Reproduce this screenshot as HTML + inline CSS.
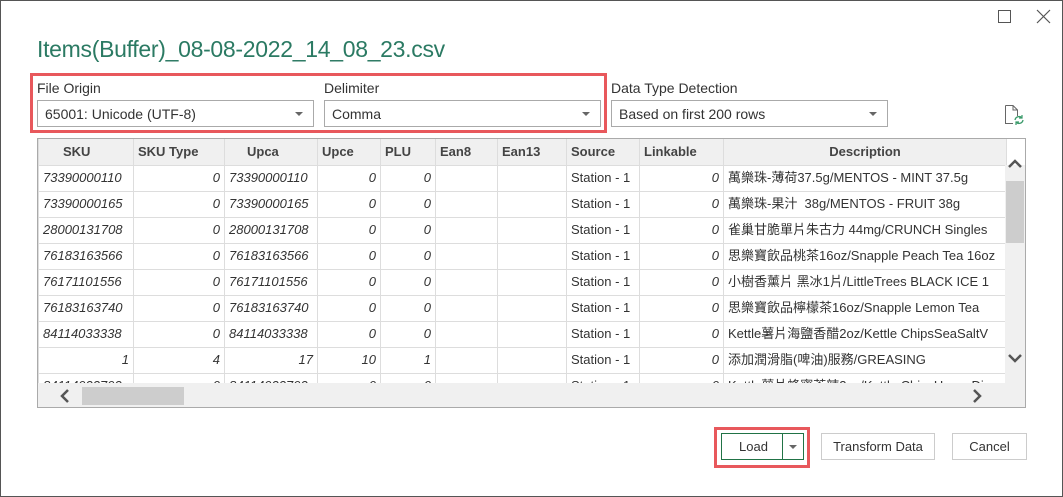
<!DOCTYPE html>
<html><head><meta charset="utf-8"><style>
*{box-sizing:border-box;margin:0;padding:0}
body{width:1063px;height:497px;background:#fff;font-family:"Liberation Sans","Noto Sans CJK TC",sans-serif;font-size:13px;color:#333;position:relative;overflow:hidden}
.frame{position:absolute;left:0;top:0;width:1063px;height:497px;border:1px solid #555}
.abs{position:absolute}
.title{left:37px;top:36px;font-size:23px;color:#2b7a63;letter-spacing:-0.3px}
.lbl{font-size:14px;color:#333}
.dd{border:1px solid #aaa;height:27px;background:#fff;font-size:14px;padding:5px 7px;color:#333}
.dd:after{content:"";position:absolute;right:10px;top:11px;border-left:4px solid transparent;border-right:4px solid transparent;border-top:4px solid #666}
.red{border:3px solid #e8585c}
table{border-collapse:collapse;table-layout:fixed;font-size:13px}
td,th{border:1px solid #ddd;height:26px;padding:0 4px;white-space:nowrap;overflow:hidden}
th{background:#f0f0f0;font-weight:bold;color:#444;text-align:left;height:26px;border-top:none}
td{font-style:italic;text-align:right;color:#333;padding-top:0;line-height:22px}
td.n{font-style:normal;text-align:left}
.btn{border:1px solid #ccc;height:27px;text-align:center;line-height:25px;font-size:13px;color:#333;background:#fff}
</style></head><body>
<div class="frame"></div>
<div class="abs" style="left:998px;top:10px;width:13px;height:13px;border:1px solid #555"></div>
<svg class="abs" style="left:1036px;top:9px" width="15" height="15"><path d="M1 1L14 14M14 1L1 14" stroke="#555" stroke-width="1.2"/></svg>
<div class="abs title">Items(Buffer)_08-08-2022_14_08_23.csv</div>
<div class="abs red" style="left:30px;top:73px;width:577px;height:60px"></div>
<div class="abs lbl" style="left:37px;top:80px">File Origin</div>
<div class="abs lbl" style="left:324px;top:80px">Delimiter</div>
<div class="abs lbl" style="left:611px;top:80px">Data Type Detection</div>
<div class="abs dd" style="left:37px;top:100px;width:277px">65001: Unicode (UTF-8)</div>
<div class="abs dd" style="left:324px;top:100px;width:277px">Comma</div>
<div class="abs dd" style="left:611px;top:100px;width:277px">Based on first 200 rows</div>
<svg class="abs" style="left:1004px;top:104px" width="20" height="22"><path d="M1.5 1.5H9L13.5 6V12M1.5 1.5V19.5H9M9 1.5V6H13.5" fill="none" stroke="#666"/><path d="M11 16a4 4 0 0 1 7-2M19 16a4 4 0 0 1-7 2" fill="none" stroke="#3a9a6a" stroke-width="1.3"/><path d="M18 11v3h-3M12 21v-3h3" fill="none" stroke="#3a9a6a" stroke-width="1.2"/></svg>
<div class="abs" style="left:37px;top:138px;width:989px;height:270px;border:1px solid #aaa;overflow:hidden;background:#fff">
<table style="width:968px">
<colgroup><col style="width:95px"><col style="width:91px"><col style="width:93px"><col style="width:63px"><col style="width:55px"><col style="width:62px"><col style="width:69px"><col style="width:73px"><col style="width:84px"><col style="width:283px"></colgroup>
<tr><th style="padding-left:24px">SKU</th><th>SKU Type</th><th style="padding-left:22px">Upca</th><th>Upce</th><th>PLU</th><th>Ean8</th><th>Ean13</th><th>Source</th><th>Linkable</th><th style="text-align:center">Description</th></tr>
<tr><td style="text-align:left">73390000110</td><td>0</td><td style="text-align:left">73390000110</td><td>0</td><td>0</td><td></td><td></td><td class="n">Station - 1</td><td>0</td><td class="n">萬樂珠-薄荷37.5g/MENTOS - MINT 37.5g</td></tr>
<tr><td style="text-align:left">73390000165</td><td>0</td><td style="text-align:left">73390000165</td><td>0</td><td>0</td><td></td><td></td><td class="n">Station - 1</td><td>0</td><td class="n">萬樂珠-果汁&nbsp; 38g/MENTOS - FRUIT 38g</td></tr>
<tr><td style="text-align:left">28000131708</td><td>0</td><td style="text-align:left">28000131708</td><td>0</td><td>0</td><td></td><td></td><td class="n">Station - 1</td><td>0</td><td class="n">雀巢甘脆單片朱古力 44mg/CRUNCH Singles</td></tr>
<tr><td style="text-align:left">76183163566</td><td>0</td><td style="text-align:left">76183163566</td><td>0</td><td>0</td><td></td><td></td><td class="n">Station - 1</td><td>0</td><td class="n">思樂寶飲品桃茶16oz/Snapple Peach Tea 16oz</td></tr>
<tr><td style="text-align:left">76171101556</td><td>0</td><td style="text-align:left">76171101556</td><td>0</td><td>0</td><td></td><td></td><td class="n">Station - 1</td><td>0</td><td class="n">小樹香薰片 黑冰1片/LittleTrees BLACK ICE 1</td></tr>
<tr><td style="text-align:left">76183163740</td><td>0</td><td style="text-align:left">76183163740</td><td>0</td><td>0</td><td></td><td></td><td class="n">Station - 1</td><td>0</td><td class="n">思樂寶飲品檸檬茶16oz/Snapple Lemon Tea</td></tr>
<tr><td style="text-align:left">84114033338</td><td>0</td><td style="text-align:left">84114033338</td><td>0</td><td>0</td><td></td><td></td><td class="n">Station - 1</td><td>0</td><td class="n">Kettle薯片海鹽香醋2oz/Kettle ChipsSeaSaltV</td></tr>
<tr><td>1</td><td>4</td><td>17</td><td>10</td><td>1</td><td></td><td></td><td class="n">Station - 1</td><td>0</td><td class="n">添加潤滑脂(啤油)服務/GREASING</td></tr>
<tr><td style="text-align:left">84114033703</td><td>0</td><td style="text-align:left">84114033703</td><td>0</td><td>0</td><td></td><td></td><td class="n">Station - 1</td><td>0</td><td class="n">Kettle薯片蜂蜜芥辣2oz/Kettle ChipsHoneyDi</td></tr>
</table>
<div class="abs" style="left:967px;top:26px;width:20px;height:218px;background:#f0f0f0"></div>
<div class="abs" style="left:968px;top:42px;width:18px;height:62px;background:#cdcdcd"></div>
<svg class="abs" style="left:968px;top:18px" width="18" height="14"><path d="M3 10L9 4L15 10" fill="none" stroke="#555" stroke-width="2.5"/></svg>
<svg class="abs" style="left:968px;top:212px" width="18" height="14"><path d="M3 4L9 10L15 4" fill="none" stroke="#555" stroke-width="2.5"/></svg>
<div class="abs" style="left:0;top:244px;width:987px;height:25px;background:#f0f0f0"></div>
<div class="abs" style="left:44px;top:248px;width:102px;height:18px;background:#cdcdcd"></div>
<svg class="abs" style="left:20px;top:248px" width="14" height="18"><path d="M10 3L4 9L10 15" fill="none" stroke="#555" stroke-width="2.5"/></svg>
<svg class="abs" style="left:932px;top:248px" width="14" height="18"><path d="M4 3L10 9L4 15" fill="none" stroke="#555" stroke-width="2.5"/></svg>
</div>
<div class="abs red" style="left:714px;top:427px;width:96px;height:41px"></div>
<div class="abs btn" style="left:721px;top:433px;width:83px;border:1px solid #217346;text-align:left;padding-left:17px">Load</div>
<div class="abs" style="left:782px;top:433px;width:1px;height:27px;background:#217346"></div>
<div class="abs" style="left:789px;top:445px;border-left:4px solid transparent;border-right:4px solid transparent;border-top:4px solid #666"></div>
<div class="abs btn" style="left:821px;top:433px;width:114px">Transform Data</div>
<div class="abs btn" style="left:952px;top:433px;width:75px">Cancel</div>
</body></html>
